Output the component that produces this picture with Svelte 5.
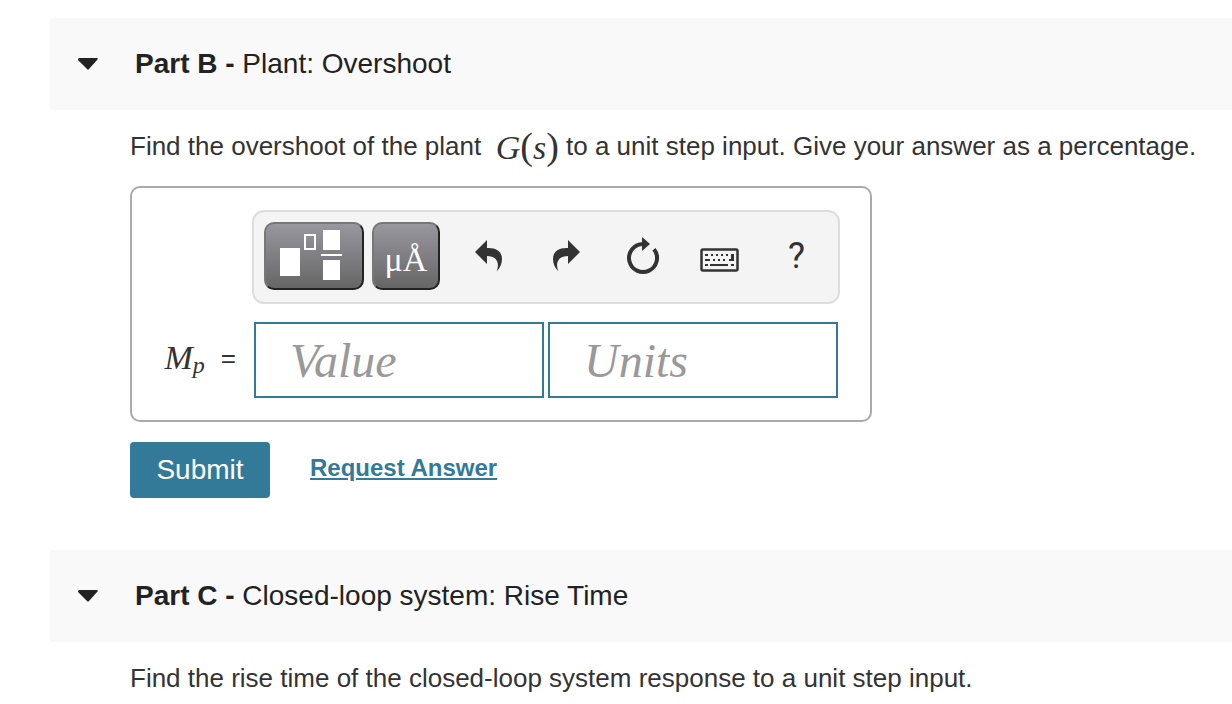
<script>
    let value = ''; // Numeric part of the answer.
    let units = ''; // Unit part of the answer.
    let openB = true;
    let openC = true;

    function handleSubmit(event) {
        event.preventDefault();
    }
</script>

<main class="assignment">
    <section class="part">
        <button type="button" class="part-header" aria-expanded={openB} on:click={() => (openB = !openB)}>
            <svg class="caret" width="20" height="12" viewBox="0 0 20 12" aria-hidden="true">
                <path d="M0 1.500Q0 0 1.500 0H18.500Q20.500 0 19.500 1.500L11 11Q10 12 9 11L.5 2.500Z" fill="currentColor" />
            </svg>
            <span><strong>Part B -&nbsp;</strong>Plant: Overshoot</span>
        </button>

        {#if openB}
            <div class="part-body">
                <p class="prompt">
                    Find the overshoot of the plant&nbsp;
                    <span class="math inline"><i>G</i><span class="paren">(</span><i>s</i><span class="paren">)</span></span>
                    to a unit step input. Give your answer as a percentage.
                </p>

                <form on:submit={handleSubmit}>
                    <div class="answer-box">
                        <div class="toolbar">
                            <button type="button" class="tool dark templates" aria-label="Templates">
                                <svg width="62" height="50" viewBox="0 0 62 50" aria-hidden="true">
                                    <g fill="#fff">
                                        <rect x="0" y="18" width="20" height="28" />
                                        <rect x="43" y="0" width="17" height="20" />
                                        <rect x="41" y="24" width="21" height="2" />
                                        <rect x="43" y="30" width="17" height="20" />
                                    </g>
                                    <rect x="25" y="5" width="10" height="14" fill="none" stroke="#fff" stroke-width="2" />
                                </svg>
                            </button>
                            <button type="button" class="tool dark symbols" aria-label="Symbols">μÅ</button>

                            <div class="actions">
                                <button type="button" class="tool" aria-label="Undo">
                                    <svg width="28" height="32" viewBox="0 0 28 32" aria-hidden="true">
                                        <path d="M0 12 12 0V8C22 7.500 27 12 27 19C27 24 25 28 21.500 31.500C25 23 22 16 12 16V24Z" fill="currentColor" />
                                    </svg>
                                </button>
                                <button type="button" class="tool" aria-label="Redo">
                                    <svg width="28" height="32" viewBox="0 0 28 32" aria-hidden="true">
                                        <path d="M28 12 16 0V8C6 7.500 1 12 1 19C1 24 3 28 6.500 31.500C3 23 6 16 16 16V24Z" fill="currentColor" />
                                    </svg>
                                </button>
                                <button type="button" class="tool" aria-label="Reset">
                                    <svg width="34" height="38" viewBox="0 0 34 38" aria-hidden="true">
                                        <path d="M17 7A14 14 0 1 0 28 12.300" fill="none" stroke="currentColor" stroke-width="4" />
                                        <path d="M16 0 24 7 16 14Z" fill="currentColor" />
                                    </svg>
                                </button>
                                <button type="button" class="tool keyboard" aria-label="Keyboard shortcuts">
                                    <svg width="40" height="24" viewBox="0 0 40 24" aria-hidden="true">
                                        <rect x="1.500" y="1.500" width="36" height="21" rx="1.500" fill="none" stroke="currentColor" stroke-width="2.500" />
                                        <path
                                            d="M5 6h3v2H5zM11 6h2v2h-2zM16 6h2v2h-2zM21 6h2v2h-2zM26 6h2v2h-2zM31 6h3v7h-5v-2h2zM5 11h5v2H5zM13 11h2v2h-2zM18 11h2v2h-2zM23 11h2v2h-2zM5 16h3v2H5zM10 16h18v2H10zM31 16h3v2h-3z"
                                            fill="currentColor"
                                        />
                                    </svg>
                                </button>
                                <button type="button" class="tool help" aria-label="Help">?</button>
                            </div>
                        </div>

                        <label class="variable" for="value">
                            <span class="math"><i>M</i><sub>p</sub></span>
                            <span>=</span>
                        </label>
                        <div class="fields">
                            <input id="value" type="text" placeholder="Value" bind:value />
                            <input type="text" placeholder="Units" aria-label="Units" bind:value={units} />
                        </div>
                    </div>

                    <div class="form-actions">
                        <button type="submit" class="submit-button">Submit</button>
                        <a href="#request-answer">Request Answer</a>
                    </div>
                </form>
            </div>
        {/if}
    </section>

    <section class="part">
        <button type="button" class="part-header" aria-expanded={openC} on:click={() => (openC = !openC)}>
            <svg class="caret" width="20" height="12" viewBox="0 0 20 12" aria-hidden="true">
                <path d="M0 1.500Q0 0 1.500 0H18.500Q20.500 0 19.500 1.500L11 11Q10 12 9 11L.5 2.500Z" fill="currentColor" />
            </svg>
            <span><strong>Part C -&nbsp;</strong>Closed-loop system: Rise Time</span>
        </button>

        {#if openC}
            <div class="part-body">
                <p class="prompt">Find the rise time of the closed-loop system response to a unit step input.</p>
            </div>
        {/if}
    </section>
</main>

<style>
    :global(body) {
        background: #fff;
    }

    .assignment {
        padding: 18px 0 0 50px;
        color: #333;
        font-family: "Liberation Sans", Arial, sans-serif;
        font-size: 26px;
    }

    button,
    input {
        box-sizing: border-box;
        font-family: inherit;
    }

    button {
        cursor: pointer;
    }

    .part + .part {
        margin-top: 52px;
    }

    .part-header {
        display: flex;
        align-items: center;
        gap: 37px;
        width: 100%;
        height: 92px;
        padding: 0 28px;
        border: none;
        background: #f9f9f9;
        color: #222;
        font-size: 28px;
        text-align: left;
    }

    .part-body {
        padding: 16px 0 0 80px;
    }

    .prompt {
        margin: 0;
        line-height: 40px;
    }

    .math {
        font-family: "Liberation Serif", "Times New Roman", serif;
        font-size: 34px;
        line-height: 30px;
    }

    .inline {
        vertical-align: -4px;
    }

    .paren {
        font-size: 38px;
    }

    .answer-box {
        display: grid;
        grid-template-columns: 120px 588px;
        row-gap: 18px;
        width: fit-content;
        margin-top: 20px;
        padding: 22px 30px 22px 0;
        border: 2px solid #aaa;
        border-radius: 10px;
    }

    .toolbar {
        display: flex;
        grid-column: 2;
        gap: 8px;
        padding: 10px 0 12px 10px;
        border: 2px solid #ddd;
        border-radius: 12px;
        background: #f4f4f4;
    }

    .tool {
        display: flex;
        flex-shrink: 0;
        align-items: center;
        justify-content: center;
        width: 77px;
        height: 68px;
        padding: 0;
        border: none;
        background: none;
        color: #333;
    }

    .dark {
        border: 2px solid #222;
        border-top-color: #777;
        border-left-color: #777;
        border-radius: 10px;
        background: linear-gradient(#99979f, #666);
        color: #fff;
    }

    .templates {
        justify-content: flex-start;
        width: 100px;
        padding: 0 0 2px 14px;
    }

    .symbols {
        width: 68px;
        padding-top: 8px;
        font-family: "Liberation Serif", "Times New Roman", serif;
        font-size: 34px;
    }

    .actions {
        display: flex;
        margin-left: 2px;
    }

    .keyboard {
        padding-top: 8px;
    }

    .help {
        font-family: Roboto, sans-serif;
        font-size: 36px;
    }

    .variable {
        display: flex;
        align-items: center;
        justify-content: flex-end;
        gap: 16px;
        padding: 0 16px 4px 0;
    }

    sub {
        font-size: 24px;
        font-style: italic;
        line-height: 0;
        vertical-align: -4px;
    }

    .fields {
        display: flex;
        gap: 4px;
        padding: 0 2px;
    }

    input {
        flex: 1;
        min-width: 0;
        height: 76px;
        padding: 0 34px;
        border: 2px solid #337a99;
        border-radius: 0;
        font-family: "Liberation Serif", "Times New Roman", serif;
        font-size: 48px;
        font-style: italic;
    }

    input::placeholder {
        color: #999;
        opacity: 1;
    }

    .form-actions {
        display: flex;
        align-items: center;
        gap: 40px;
        margin-top: 20px;
    }

    .submit-button {
        width: 140px;
        height: 56px;
        border: none;
        border-radius: 4px;
        background: #337a99;
        color: #fff;
        font-size: 28px;
    }

    a {
        padding-bottom: 4px;
        color: #337a99;
        font-size: 24px;
        font-weight: bold;
    }
</style>
